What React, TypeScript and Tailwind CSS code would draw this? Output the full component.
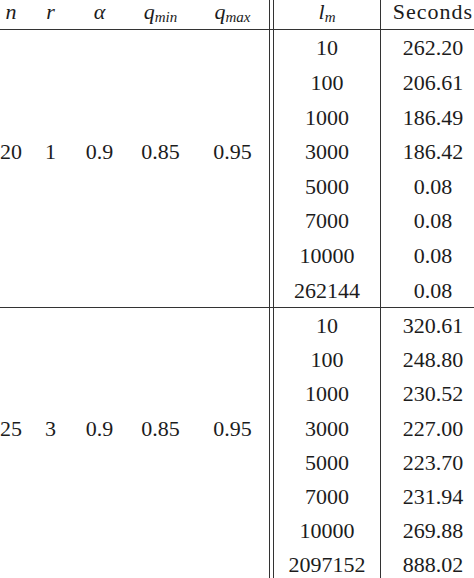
import React from "react";

type Group = {
  n: string;
  r: string;
  alpha: string;
  qmin: string;
  qmax: string;
  rowH: string;
  rows: [string, string][];
};

const groups: Group[] = [
  {
    n: "20",
    r: "1",
    alpha: "0.9",
    qmin: "0.85",
    qmax: "0.95",
    rowH: "h-[34.625px]",
    rows: [
      ["10", "262.20"],
      ["100", "206.61"],
      ["1000", "186.49"],
      ["3000", "186.42"],
      ["5000", "0.08"],
      ["7000", "0.08"],
      ["10000", "0.08"],
      ["262144", "0.08"],
    ],
  },
  {
    n: "25",
    r: "3",
    alpha: "0.9",
    qmin: "0.85",
    qmax: "0.95",
    rowH: "h-[34.2px]",
    rows: [
      ["10", "320.61"],
      ["100", "248.80"],
      ["1000", "230.52"],
      ["3000", "227.00"],
      ["5000", "223.70"],
      ["7000", "231.94"],
      ["10000", "269.88"],
      ["2097152", "888.02"],
    ],
  },
];

// column widths (px) of the left block
const leftCols = ["w-[32px]", "w-[47px]", "w-[51px]", "w-[71px]", "w-[73px]"];

function Sub({ children }: { children: React.ReactNode }) {
  return <span className="relative top-[5px] text-[15px] italic">{children}</span>;
}

function DoubleRule() {
  return <div className="w-[5px] shrink-0 border-x border-[#333]" />;
}

export default function App() {
  return (
    <div className="h-[578px] w-[474px] overflow-hidden bg-white font-['Liberation_Serif','Times_New_Roman',serif] text-[#1c1c1c]">
      <div className="ml-[-5px] mt-[-5px] w-[490px] text-[22px] leading-none">
        {/* header */}
        <div className="flex h-[35px] border-b border-[#333]">
          <div className={`${leftCols[0]} flex items-center justify-center italic`}>n</div>
          <div className={`${leftCols[1]} flex items-center justify-center italic`}>r</div>
          <div className={`${leftCols[2]} flex items-center justify-center italic`}>α</div>
          <div className={`${leftCols[3]} flex items-center justify-center italic`}>
            q<Sub>min</Sub>
          </div>
          <div className={`${leftCols[4]} flex items-center justify-center italic`}>
            q<Sub>max</Sub>
          </div>
          <DoubleRule />
          <div className="flex w-[107px] items-center justify-center border-r border-[#333] italic">
            l<Sub>m</Sub>
          </div>
          <div className="flex w-[104px] items-center justify-center tracking-[1px]">Seconds</div>
        </div>

        {groups.map((g, gi) => (
          <div key={gi} className="flex border-b border-[#333]">
            {[g.n, g.r, g.alpha, g.qmin, g.qmax].map((v, i) => (
              <div key={i} className={`${leftCols[i]} flex flex-col`}>
                {/* multirow value sits on the 4th row */}
                {[0, 1, 2, 3].map((k) => (
                  <div
                    key={k}
                    className={`${g.rowH} flex items-center justify-center pt-[2px]`}
                  >
                    {k === 3 ? v : null}
                  </div>
                ))}
              </div>
            ))}
            <DoubleRule />
            <div className="flex flex-col">
              {g.rows.map(([lm, sec], ri) => (
                <div key={ri} className={`${g.rowH} flex`}>
                  <div className="flex w-[107px] items-center justify-center border-r border-[#333] pt-[2px]">
                    {lm}
                  </div>
                  <div className="flex w-[104px] items-center justify-center pt-[2px]">{sec}</div>
                </div>
              ))}
            </div>
          </div>
        ))}
      </div>
    </div>
  );
}
